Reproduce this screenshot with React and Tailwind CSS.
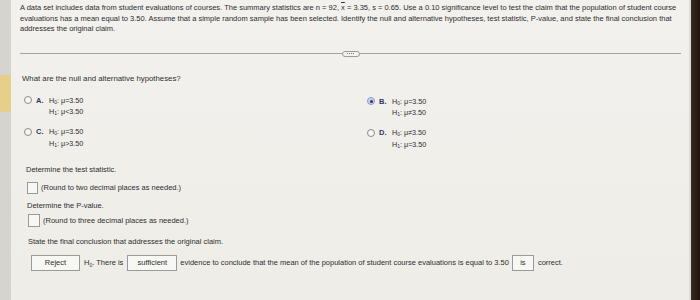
import React from 'react';

const Sub = ({ children }) => (
  <sub className="text-[5px] leading-none">{children}</sub>
);

const Radio = ({ checked }) =>
  checked ? (
    <span className="flex h-[8px] w-[8px] items-center justify-center rounded-full border border-[#8f9bc4] bg-[#c9d2ec]">
      <span className="h-[3px] w-[3px] rounded-full bg-[#27346a]" />
    </span>
  ) : (
    <span className="h-[8px] w-[8px] rounded-full border border-[#8a8a8a] bg-[#f6f6f3]" />
  );

const Option = ({ letter, checked, h0, h1, className }) => (
  <div className={`flex items-start ${className}`}>
    <div className="flex h-[11.5px] items-center">
      <Radio checked={checked} />
    </div>
    <span className="ml-[4px] w-[13px] font-bold leading-[11.5px] text-[#2e3766]">{letter}.</span>
    <div className="text-[7.2px] leading-[11.5px]">
      <div>
        H<Sub>0</Sub>: μ{h0}
      </div>
      <div>
        H<Sub>1</Sub>: μ{h1}
      </div>
    </div>
  </div>
);

const Box = ({ children, className }) => (
  <span
    className={`flex items-center justify-center border border-[#9a9a9a] bg-[#f7f7f4] ${className}`}
  >
    {children}
  </span>
);

export default function App() {
  return (
    <div className="flex h-[300px] w-[700px] overflow-hidden bg-[#efeee9] font-['Liberation_Sans',Arial,sans-serif] text-[7.5px] text-[#2e2e2e]">
      <div className="flex w-[11px] shrink-0 flex-col bg-[#d6d4cf]">
        <div className="mt-[75px] h-[37px] bg-[#e6cf8a]" />
      </div>

      <div className="flex flex-1 flex-col bg-gradient-to-b from-[#f2f1ed] to-[#eeede8] pl-[9px] pr-[8px]">
        <div className="pt-[3px] leading-[10.5px] whitespace-nowrap">
          <div>
            A data set includes data from student evaluations of courses. The summary statistics are n = 92,{' '}
            <span className="overline">x</span> = 3.35, s = 0.65. Use a 0.10 significance level to test the claim that the population of student course
          </div>
          <div>
            evaluations has a mean equal to 3.50. Assume that a simple random sample has been selected. Identify the null and alternative hypotheses, test statistic, P-value, and state the final conclusion that
          </div>
          <div>addresses the original claim.</div>
        </div>

        <div className="mt-[16px] flex items-center">
          <div className="h-px flex-1 bg-[#a3a3a0]" />
          <div className="flex h-[6px] w-[18px] items-center justify-center gap-[1px] rounded-full border border-[#9a9a9a] bg-[#f4f4f1]">
            <span className="h-[1px] w-[1px] bg-[#777]" />
            <span className="h-[1px] w-[1px] bg-[#777]" />
            <span className="h-[1px] w-[1px] bg-[#777]" />
            <span className="h-[1px] w-[1px] bg-[#777]" />
          </div>
          <div className="h-px flex-1 bg-[#a3a3a0]" />
        </div>

        <div className="ml-[2px] mt-[17px] text-[7.8px] leading-[10px]">What are the null and alternative hypotheses?</div>

        <div className="ml-[4px] mt-[11px] grid grid-cols-[343px_1fr]">
          <div className="flex flex-col">
            <Option letter="A" h0="=3.50" h1="<3.50" />
            <Option letter="C" h0="=3.50" h1=">3.50" className="mt-[8.5px]" />
          </div>
          <div className="flex flex-col pt-[1px]">
            <Option letter="B" checked h0="=3.50" h1="≠3.50" />
            <Option letter="D" h0="≠3.50" h1="=3.50" className="mt-[8.5px]" />
          </div>
        </div>

        <div className="ml-[6px] mt-[15px] leading-[10px]">Determine the test statistic.</div>
        <div className="ml-[7px] mt-[7px] flex items-center">
          <Box className="h-[12px] w-[11px]" />
          <span className="ml-[3px]">(Round to two decimal places as needed.)</span>
        </div>

        <div className="ml-[7px] mt-[7px] leading-[10px]">Determine the P-value.</div>
        <div className="ml-[8px] mt-[3px] flex items-center">
          <Box className="h-[13px] w-[12px]" />
          <span className="ml-[3px]">(Round to three decimal places as needed.)</span>
        </div>

        <div className="ml-[8px] mt-[10px] leading-[10px]">State the final conclusion that addresses the original claim.</div>
        <div className="ml-[11px] mt-[8px] flex items-center whitespace-nowrap">
          <Box className="h-[16px] w-[49px]">Reject</Box>
          <span className="ml-[4px]">
            H<Sub>0</Sub>. There is
          </span>
          <Box className="ml-[4px] h-[16px] w-[50px]">sufficient</Box>
          <span className="ml-[3px]">
            evidence to conclude that the mean of the population of student course evaluations is equal to 3.50
          </span>
          <Box className="ml-[3px] h-[16px] w-[22px]">is</Box>
          <span className="ml-[4px]">correct.</span>
        </div>
      </div>

      <div className="w-[2px] shrink-0 bg-[#d9dcd9]" />
      <div className="w-[9px] shrink-0 bg-gradient-to-r from-[#3a2a20] to-[#1e140f]" />
    </div>
  );
}
